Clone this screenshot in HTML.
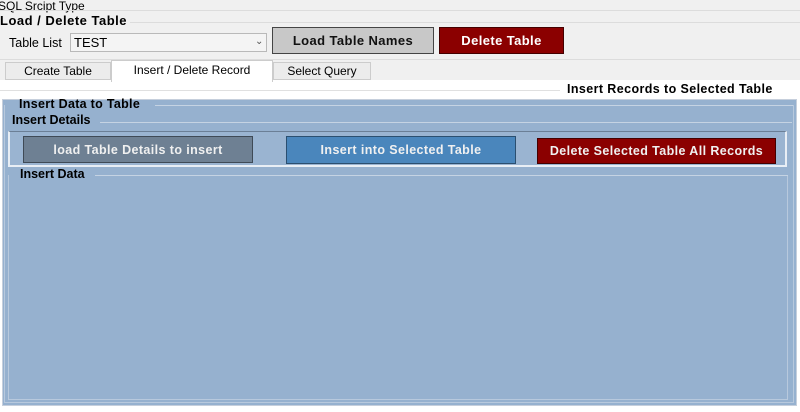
<!DOCTYPE html>
<html><head><style>
body{margin:0;width:800px;height:412px;background:#f0f0f0;font-family:"Liberation Sans","Noto Sans CJK KR",sans-serif;position:relative;overflow:hidden;font-size:12px;color:#000}
.a{position:absolute}
.b{font-weight:bold}
.btn{position:absolute;display:flex;align-items:center;justify-content:center;font-weight:bold;font-size:12.5px;letter-spacing:.4px;box-sizing:border-box}
</style></head><body>
<div class="a" style="left:-2px;top:-1px;font-size:12px">SQL Srcipt Type</div>
<div class="a" style="left:0;top:10px;width:800px;height:1px;background:#dcdcdc"></div>
<div class="a b" style="left:0;top:13px;font-size:13px;letter-spacing:.5px">Load / Delete Table</div>
<div class="a" style="left:130px;top:22px;width:670px;height:1px;background:#dcdcdc"></div>
<div class="a" style="left:0;top:59px;width:800px;height:1px;background:#dcdcdc"></div>
<div class="a" style="left:9px;top:36px;font-size:12.5px">Table List</div>
<div class="a" style="left:70px;top:33px;width:197px;height:19px;border:1px solid #b9b9b9;background:#f4f4f4;box-sizing:border-box"></div>
<div class="a" style="left:74px;top:35px;font-size:13px">TEST</div>
<div class="a" style="left:255px;top:36px;font-size:10px;color:#555">&#8964;</div>
<div class="btn" style="left:272px;top:27px;width:162px;height:27px;background:#c8c8c8;border:1px solid #444;color:#111;font-size:13px">Load Table Names</div>
<div class="btn" style="left:439px;top:27px;width:125px;height:27px;background:#8b0000;border:1px solid #400;color:#fff;font-size:13px">Delete Table</div>
<div class="a" style="left:0;top:80px;width:800px;height:332px;background:#fff"></div>
<div class="a" style="left:5px;top:62px;width:106px;height:18px;background:#ececec;border:1px solid #ccc;box-sizing:border-box;text-align:center;line-height:17px">Create Table</div>
<div class="a" style="left:111px;top:60px;width:162px;height:22px;background:#fff;border:1px solid #ccc;border-bottom:none;box-sizing:border-box;text-align:center;line-height:18px">Insert / Delete Record</div>
<div class="a" style="left:273px;top:62px;width:98px;height:18px;background:#ececec;border:1px solid #ccc;box-sizing:border-box;text-align:center;line-height:17px">Select Query</div>
<div class="a" style="left:0;top:90px;width:560px;height:1px;background:#e0e0e0"></div>
<div class="a b" style="left:567px;top:82px;font-size:12.5px;letter-spacing:.4px">Insert Records to Selected Table</div>
<div class="a" style="left:2px;top:99px;width:795px;height:307px;background:#96b1cf;border:1px solid #c6cfdc;box-sizing:border-box"></div>
<div class="a" style="left:4px;top:105px;width:790px;height:298px;border:1px solid #b8c9dd;border-top:none;box-sizing:border-box"></div>
<div class="a" style="left:155px;top:105px;width:638px;height:1px;background:#c5d3e3"></div>
<div class="a b" style="left:19px;top:97px;font-size:12.5px;letter-spacing:.3px">Insert Data to Table</div>
<div class="a" style="left:100px;top:122px;width:692px;height:1px;background:#c5d3e3"></div>
<div class="a b" style="left:12px;top:113px;font-size:12.5px">Insert Details</div>
<div class="a" style="left:8px;top:131px;width:779px;height:36px;border:2px solid #e8eef5;border-top:1px solid #6b7f96;box-sizing:border-box;background:#9ab4d1"></div>
<div class="btn" style="left:23px;top:136px;width:230px;height:27px;background:#6e8093;border:1px solid #3f4a56;color:#f0f0f0">load Table Details to insert</div>
<div class="btn" style="left:286px;top:136px;width:230px;height:28px;background:#4a86bc;border:1px solid #2b4f70;color:#f0f0f0">Insert into Selected Table</div>
<div class="btn" style="left:537px;top:138px;width:239px;height:26px;background:#8b0000;border:1px solid #400;color:#f0f0f0">Delete Selected Table All Records</div>
<div class="a" style="left:8px;top:175px;width:780px;height:225px;border:1px solid #b8c9dd;border-top:none;box-sizing:border-box"></div>
<div class="a" style="left:95px;top:175px;width:693px;height:1px;background:#c5d3e3"></div>
<div class="a b" style="left:20px;top:167px;font-size:12.5px">Insert Data</div>
</body></html>
